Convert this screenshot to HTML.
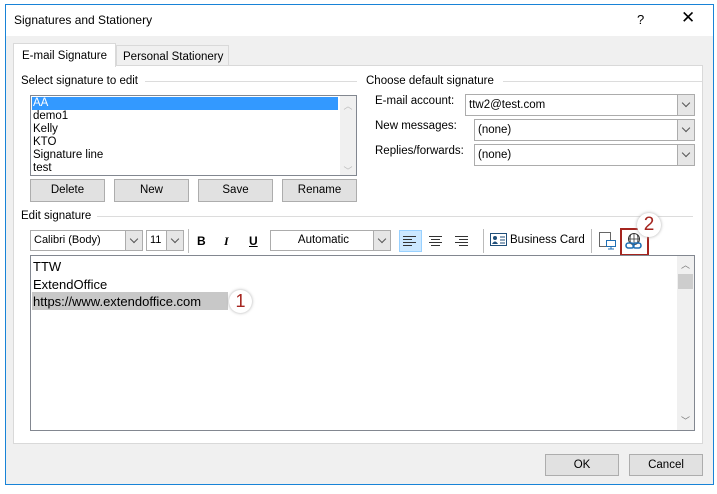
<!DOCTYPE html>
<html><head><style>
*{margin:0;padding:0;box-sizing:border-box}
body{width:717px;height:494px;background:#fff;position:relative;overflow:hidden;font-family:"Liberation Sans",sans-serif;font-size:11.5px;color:#000}
.a{position:absolute}
.btn{position:absolute;background:#e1e1e1;border:1px solid #adadad;text-align:center;line-height:21px;font-size:11.5px}
.combo{position:absolute;background:#fff;border:1px solid #acacac;line-height:21px;padding-left:3px;font-size:11.5px}
.combo .dd{position:absolute;right:0;top:0;bottom:0;width:17px;background:#e6e6e6;border-left:1px solid #acacac}
.combo .dd:after{content:"";position:absolute;left:5px;top:5px;width:5px;height:5px;border-right:1px solid #555;border-bottom:1px solid #555;transform:rotate(45deg)}
.line{position:absolute;height:1px;background:#dcdcdc}
.sep{position:absolute;width:1px;background:#bbb}
</style></head><body>
<div class="a" style="left:5px;top:4px;width:709px;height:481px;border:1px solid #1883d7;background:#f0f0f0"></div>
<div class="a" style="left:6px;top:5px;width:707px;height:31px;background:#fff"></div>
<div class="a" style="left:14px;top:13px;font-size:12px">Signatures and Stationery</div>
<div class="a" style="left:637px;top:12px;font-size:13px">?</div>
<div class="a" style="left:681px;top:8px;font-size:17px;font-weight:normal">✕</div>

<div class="a" style="left:116px;top:45px;width:113px;height:21px;border:1px solid #d9d9d9;background:#f0f0f0;padding:5px 0 0 6px">Personal Stationery</div>
<div class="a" style="left:13px;top:65px;width:690px;height:379px;border:1px solid #d9d9d9;background:#fff"></div>
<div class="a" style="left:13px;top:43px;width:103px;height:24px;border:1px solid #d9d9d9;border-bottom:none;background:#fff;padding:6px 0 0 8px">E-mail Signature</div>

<div class="a" style="left:21px;top:75px">Select signature to edit</div>
<div class="line" style="left:145px;top:81px;width:212px"></div>
<div class="a" style="left:30px;top:95px;width:327px;height:81px;border:1px solid #828790;background:#fff"></div>
<div class="a" style="left:32px;top:97px;width:306px;height:13px;background:#3399ff"></div>
<div class="a" style="left:33px;top:97px;line-height:13px">
<div style="color:#fff">AA</div><div>demo1</div><div>Kelly</div><div>KTO</div><div>Signature line</div><div>test</div></div>
<div class="a" style="left:340px;top:96px;width:16px;height:79px;background:#f0f0f0;color:#bbb;font-size:9px;text-align:center"><div style="margin-top:3px">︿</div><div style="margin-top:52px">﹀</div></div>
<div class="btn" style="left:30px;top:179px;width:75px;height:23px">Delete</div>
<div class="btn" style="left:114px;top:179px;width:75px;height:23px">New</div>
<div class="btn" style="left:198px;top:179px;width:75px;height:23px">Save</div>
<div class="btn" style="left:282px;top:179px;width:75px;height:23px">Rename</div>

<div class="a" style="left:366px;top:75px">Choose default signature</div>
<div class="line" style="left:503px;top:81px;width:199px"></div>
<div class="a" style="left:375px;top:95px">E-mail account:</div>
<div class="combo" style="left:465px;top:94px;width:230px;height:22px">ttw2@test.com<div class="dd"></div></div>
<div class="a" style="left:375px;top:120px">New messages:</div>
<div class="combo" style="left:474px;top:119px;width:221px;height:22px">(none)<div class="dd"></div></div>
<div class="a" style="left:375px;top:145px">Replies/forwards:</div>
<div class="combo" style="left:474px;top:144px;width:221px;height:22px">(none)<div class="dd"></div></div>

<div class="a" style="left:21px;top:210px">Edit signature</div>
<div class="line" style="left:97px;top:216px;width:596px"></div>
<div class="combo" style="left:30px;top:230px;width:113px;height:21px;font-size:11px;line-height:19px">Calibri (Body)<div class="dd"></div></div>
<div class="combo" style="left:146px;top:230px;width:38px;height:21px;font-size:11px;line-height:19px">11<div class="dd"></div></div>
<div class="sep" style="left:188px;top:229px;height:24px"></div>
<div class="a" style="left:197px;top:234px;font-weight:bold;font-size:12px">B</div>
<div class="a" style="left:224px;top:234px;font-style:italic;font-weight:bold;font-size:12px;font-family:'Liberation Serif',serif">I</div>
<div class="a" style="left:249px;top:234px;font-weight:bold;text-decoration:underline;font-size:12px">U</div>
<div class="combo" style="left:270px;top:230px;width:121px;height:21px;text-align:center;padding-right:17px;line-height:19px">Automatic<div class="dd"></div></div>
<div class="a" style="left:399px;top:230px;width:23px;height:22px;background:#cce8ff;border:1px solid #99d1ff"></div>
<svg class="a" style="left:403px;top:235px" width="100" height="14"><g stroke="#333" stroke-width="1">
<path d="M0 1.5h13M0 4.5h9M0 7.5h13M0 10.5h9"/>
<path d="M26 1.5h13M28 4.5h9M26 7.5h13M28 10.5h9"/>
<path d="M52 1.5h13M56 4.5h9M52 7.5h13M56 10.5h9"/></g></svg>
<div class="sep" style="left:483px;top:229px;height:24px"></div>
<svg class="a" style="left:490px;top:233px" width="18" height="14"><rect x="0.5" y="0.5" width="16" height="12" fill="#fff" stroke="#1f4e79"/><circle cx="5" cy="5" r="2" fill="#1f4e79"/><path d="M2 11q3-5 6 0z" fill="#1f4e79"/><path d="M10 4h5M10 7h5M10 10h5" stroke="#1f4e79"/></svg>
<div class="a" style="left:510px;top:234px">Business Card</div>
<div class="sep" style="left:591px;top:229px;height:24px"></div>
<svg class="a" style="left:599px;top:232px" width="18" height="18"><rect x="0.5" y="0.5" width="11" height="14" fill="#fff" stroke="#666"/><rect x="7.5" y="8.5" width="9" height="6" fill="#fff" stroke="#1f6fb5"/><path d="M12 15v2M9 17h6" stroke="#1f6fb5"/></svg>
<div class="a" style="left:620px;top:228px;width:29px;height:28px;border:2px solid #a5251f"></div>
<svg class="a" style="left:624px;top:232px" width="20" height="20"><circle cx="10" cy="7" r="5.5" fill="none" stroke="#333"/><path d="M4.5 7h11M10 1.5v11M7 2q-2 5 0 10M13 2q2 5 0 10" stroke="#333" fill="none" stroke-width=".8"/><rect x="2" y="11" width="8" height="5" rx="2.5" fill="none" stroke="#1f6fb5" stroke-width="1.6"/><rect x="9" y="11" width="8" height="5" rx="2.5" fill="none" stroke="#1f6fb5" stroke-width="1.6"/></svg>
<div class="a" style="left:637px;top:213px;width:24px;height:24px;border-radius:50%;background:#fff;box-shadow:0 0 3px #aaa;color:#a5251f;font-size:19px;text-align:center;line-height:24px">2</div>

<div class="a" style="left:30px;top:255px;width:665px;height:176px;border:1px solid #828790;background:#fff"></div>
<div class="a" style="left:677px;top:256px;width:17px;height:174px;background:#f0f0f0;color:#777;font-size:9px;text-align:center"><div style="margin-top:2px">︿</div><div style="position:absolute;top:18px;left:1px;width:15px;height:15px;background:#cdcdcd"></div><div style="margin-top:143px">﹀</div></div>
<div class="a" style="left:32px;top:292px;width:196px;height:18px;background:#c8c8c8"></div>
<div class="a" style="left:33px;top:258px;font-size:13px;line-height:17.5px"><div>TTW</div><div>ExtendOffice</div><div>https://www.extendoffice.com</div></div>
<div class="a" style="left:229px;top:290px;width:23px;height:23px;border-radius:50%;background:#fff;box-shadow:0 0 3px #aaa;color:#a5251f;font-size:18px;text-align:center;line-height:23px">1</div>

<div class="btn" style="left:545px;top:454px;width:74px;height:22px">OK</div>
<div class="btn" style="left:629px;top:454px;width:74px;height:22px">Cancel</div>
</body></html>
